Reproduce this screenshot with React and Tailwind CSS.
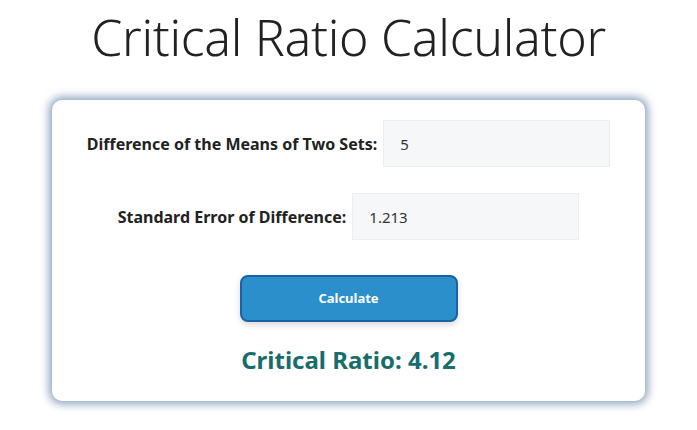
export default function App() {
  return (
    <div className="min-h-[430px] bg-white text-[#212529]" style={{ fontFamily: '"Noto Sans", "Open Sans", sans-serif' }}>
      <h1 className="pt-[4px] text-center text-[50px] leading-[66px] font-light tracking-[-0.3px] text-[#222]">
        Critical Ratio Calculator
      </h1>
      <div className="mx-auto mt-[30px] w-[593px] h-[301px] rounded-[10px] bg-white shadow-[0_0_8px_3px_rgba(90,125,165,0.7)] pt-[20px]">
        <div className="flex items-center justify-center gap-[6px]">
          <label className="text-[16px] font-bold text-[#222]">Difference of the Means of Two Sets:</label>
          <input
            defaultValue="5"
            className="w-[227px] h-[47px] px-[16px] bg-[#f6f7f9] border border-[#eceef1] text-[15px] text-[#333] outline-none"
          />
        </div>
        <div className="flex items-center justify-center gap-[6px] mt-[26px]">
          <label className="text-[16px] font-bold text-[#222]">Standard Error of Difference:</label>
          <input
            defaultValue="1.213"
            className="w-[227px] h-[47px] px-[16px] bg-[#f6f7f9] border border-[#eceef1] text-[15px] text-[#333] outline-none"
          />
        </div>
        <div className="flex justify-center mt-[35px]">
          <button className="w-[218px] h-[47px] rounded-[8px] bg-[#2a8fca] border-2 border-[#1a62a3] text-white text-[13px] font-bold shadow-[0_3px_6px_rgba(0,0,0,0.15)]">
            Calculate
          </button>
        </div>
        <div className="mt-[20px] text-center text-[24px] font-bold text-[#176c6c]">
          Critical Ratio: 4.12
        </div>
      </div>
    </div>
  );
}
